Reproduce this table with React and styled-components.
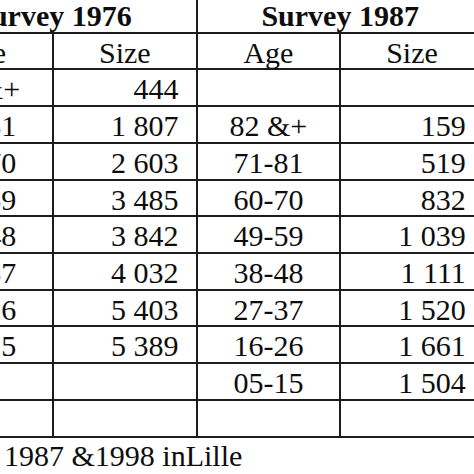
import React from 'react';
import styled, { createGlobalStyle } from 'styled-components';

const GlobalStyle = createGlobalStyle`
  html, body {
    margin: 0;
    padding: 0;
    background: #ffffff;
  }
  body {
    width: 474px;
    height: 474px;
    overflow: hidden;
  }
`;

const rows1976 = [
    { age: '82 &+', size: '444' },
    { age: '71-81', size: '1 807' },
    { age: '60-70', size: '2 603' },
    { age: '49-59', size: '3 485' },
    { age: '38-48', size: '3 842' },
    { age: '27-37', size: '4 032' },
    { age: '16-26', size: '5 403' },
    { age: '05-15', size: '5 389' },
    { age: '', size: '' },
    { age: '', size: '' },
];

const rows1987 = [
    { age: '', size: '' },
    { age: '82 &+', size: '159' },
    { age: '71-81', size: '519' },
    { age: '60-70', size: '832' },
    { age: '49-59', size: '1 039' },
    { age: '38-48', size: '1 111' },
    { age: '27-37', size: '1 520' },
    { age: '16-26', size: '1 661' },
    { age: '05-15', size: '1 504' },
    { age: '', size: '' },
];

const App = () => {
    return (
        <Page>
            <GlobalStyle />
            <Survey>
                <colgroup>
                    <col />
                    <col />
                    <col />
                    <col />
                </colgroup>
                <thead>
                    <tr>
                        <Title colSpan={2}>Survey 1976</Title>
                        <Title colSpan={2}>Survey 1987</Title>
                    </tr>
                    <tr>
                        <Head>Age</Head>
                        <Head>Size</Head>
                        <Head>Age</Head>
                        <Head>Size</Head>
                    </tr>
                </thead>
                <tbody>
                    {rows1976.map((r, i) => (
                        <tr key={i}>
                            <Cell>{r.age}</Cell>
                            <Cell $num>{r.size}</Cell>
                            <Cell>{rows1987[i].age}</Cell>
                            <Cell $num>{rows1987[i].size}</Cell>
                        </tr>
                    ))}
                </tbody>
            </Survey>
            <Caption>1987 &amp;1998 inLille</Caption>
        </Page>
    );
};

const Page = styled.div`
    width: 474px;
    height: 474px;
    overflow: hidden;
    font-family: "Liberation Serif", "Times New Roman", serif;
    color: #0d0d0d;
`;

const Survey = styled.table`
    border-collapse: collapse;
    table-layout: fixed;
    width: 574.4px;
    margin: -4px 0 0 -91.6px;

    col {
        width: 143.6px;
    }

    tr {
        height: 36.73px;
    }
`;

const Title = styled.th`
    font-size: 30px;
    font-weight: 700;
    line-height: 31.7px;
    padding: 3px 0 0;
    text-align: center;
    border-left: 2px solid #1c1c1c;
    border-right: 2px solid #1c1c1c;
    border-bottom: 2px solid #1c1c1c;
    white-space: nowrap;
`;

const Head = styled.th`
    font-size: 30px;
    font-weight: 400;
    line-height: 31.7px;
    padding: 3px 0 0;
    text-align: center;
    border: 2px solid #1c1c1c;
`;

const Cell = styled.td`
    font-size: 30px;
    line-height: 31.7px;
    padding: ${p => (p.$num ? '3px 17px 0 0' : '3px 0 0')};
    text-align: ${p => (p.$num ? 'right' : 'center')};
    border: 2px solid #1c1c1c;
    white-space: nowrap;
`;

const Caption = styled.div`
    font-size: 30px;
    line-height: 34px;
    margin: 1px 0 0 4px;
    white-space: nowrap;
`;

export default App;
